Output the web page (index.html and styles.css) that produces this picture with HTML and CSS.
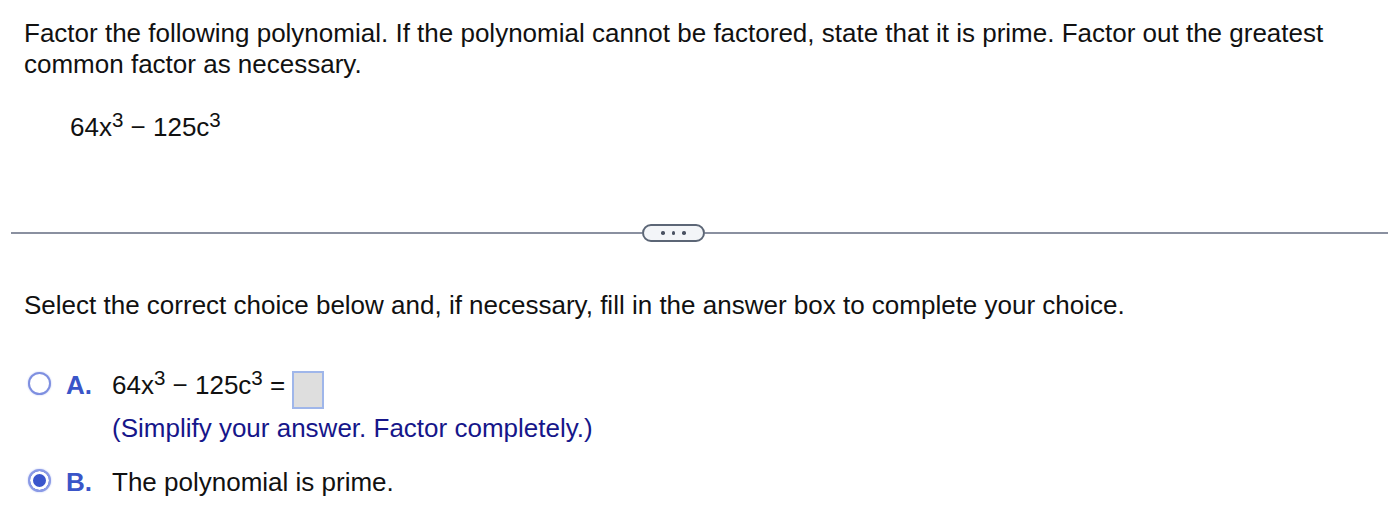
FILE: index.html
```html
<!DOCTYPE html>
<html>
<head>
<meta charset="utf-8">
<link rel="stylesheet" href="styles.css">
</head>
<body>
<div class="page">
  <div class="question">
    <p class="prompt">Factor the following polynomial. If the polynomial cannot be factored, state that it is prime. Factor out the greatest common factor as necessary.</p>
    <p class="expr">64x<sup>3</sup> − 125c<sup>3</sup></p>
  </div>
  <div class="divider">
    <span class="line line-left"></span>
    <span class="pill"><i></i><i></i><i></i></span>
    <span class="line line-right"></span>
  </div>
  <div class="answer">
    <p class="instr">Select the correct choice below and, if necessary, fill in the answer box to complete your choice.</p>
    <div class="choice choice-a">
      <span class="radio"></span>
      <span class="letter">A.</span>
      <div class="body">
        <div class="eq">64x<sup>3</sup> − 125c<sup>3</sup> = <span class="box"></span></div>
        <div class="hint">(Simplify your answer. Factor completely.)</div>
      </div>
    </div>
    <div class="choice choice-b">
      <span class="radio checked"></span>
      <span class="letter">B.</span>
      <div class="body">The polynomial is prime.</div>
    </div>
  </div>
</div>
</body>
</html>
```
FILE: styles.css
```css
html, body {
  margin: 0;
  padding: 0;
  background: #fff;
}
body {
  font-family: "Liberation Sans", Arial, sans-serif;
  color: #111;
  font-size: 26px;
}
.page {
  width: 1388px;
}
.question {
  padding: 18px 24px 0 24px;
}
.prompt {
  margin: 0;
  line-height: 31px;
  max-width: 1320px;
}
.expr {
  margin: 32px 0 0 46px;
  line-height: 31px;
}
sup {
  font-size: 0.79em;
  vertical-align: baseline;
  position: relative;
  top: -0.45em;
  line-height: 0;
}
.divider {
  display: flex;
  align-items: center;
  padding-left: 11px;
  height: 18px;
  margin-top: 81px;
}
.line {
  height: 2px;
  background: #8a90a0;
}
.line-left {
  width: 631px;
  flex: none;
}
.line-right {
  flex: 1;
}
.pill {
  width: 63px;
  height: 18px;
  box-sizing: border-box;
  border: 2px solid #5c6676;
  border-radius: 9px;
  background: #f3f5f8;
  display: flex;
  align-items: center;
  justify-content: center;
  gap: 7px;
  flex: none;
}
.pill i {
  width: 3.5px;
  height: 3.5px;
  border-radius: 50%;
  background: #4a5262;
}
.instr {
  margin: 48px 0 0 24px;
  line-height: 30px;
}
.choice {
  display: flex;
  align-items: flex-start;
  line-height: 30px;
}
.choice-a {
  margin-top: 50px;
}
.choice-b {
  margin-top: 24px;
}
.radio {
  width: 23px;
  height: 23px;
  border: 2px solid #7e8fe0;
  border-radius: 50%;
  box-sizing: border-box;
  margin: 2px 0 0 28px;
  flex: none;
  background: #fff;
  box-shadow: 0 0 2px #b6c0f0;
}
.radio.checked {
  border: 2px solid #8a9ae6;
  background: #3a55cc;
  box-shadow: inset 0 0 0 3px #fff, 0 0 2px #b6c0f0;
}
.letter {
  color: #3a55c8;
  font-weight: bold;
  width: 46px;
  margin-left: 15px;
  flex: none;
}
.eq {
  height: 30px;
  white-space: pre;
}
.box {
  display: inline-block;
  width: 32px;
  height: 38px;
  box-sizing: border-box;
  background: #dedede;
  border: 2px solid #9fb6ea;
  vertical-align: -15px;
}
.hint {
  color: #16168a;
  margin-top: 13px;
}
```
